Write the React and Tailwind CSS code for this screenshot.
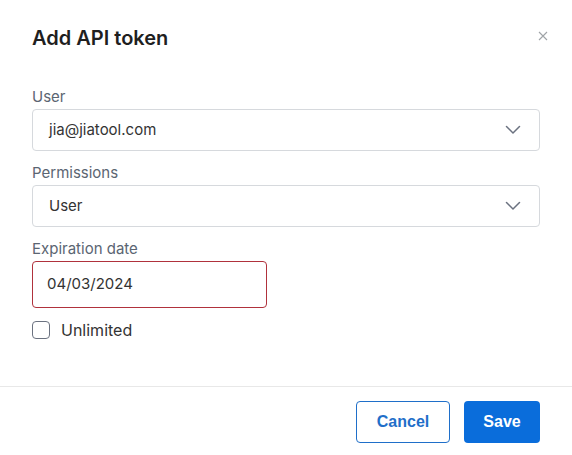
import React, { useState } from "react";

const Chevron = () => (
  <svg width="16" height="10" viewBox="0 0 16 10" fill="none" className="shrink-0">
    <path d="M1.5 1.5L8 8L14.5 1.5" stroke="#6b7280" strokeWidth="1.5" strokeLinecap="round" strokeLinejoin="round" />
  </svg>
);

function Field({ label, children }) {
  return (
    <div className="flex flex-col">
      <label className="text-[15px] leading-[20px] text-[#5b6572] mb-[2px]">{label}</label>
      {children}
    </div>
  );
}

function SelectBox({ value }) {
  return (
    <div className="h-[42px] flex items-center justify-between rounded-[4px] border border-[#d6d9dd] pl-[16px] pr-[18px] text-[15px] text-[#333]">
      <span>{value}</span>
      <Chevron />
    </div>
  );
}

export default function App() {
  const [unlimited, setUnlimited] = useState(false);

  return (
    <div className="w-[572px] h-[455px] bg-white font-['Inter',sans-serif] text-[#222]">
      {/* header */}
      <div className="flex items-start justify-between pl-[32px] pr-[24px] pt-[24px]">
        <h2 className="text-[20px] leading-[28px] font-semibold text-[#1f1f1f]">Add API token</h2>
        <button className="mt-[7px] text-[#9ca3af]">
          <svg width="10" height="10" viewBox="0 0 10 10">
            <path d="M1 1L9 9M9 1L1 9" stroke="#a0a4a8" strokeWidth="1.1" />
          </svg>
        </button>
      </div>

      {/* body */}
      <div className="px-[32px] pt-[35px] flex flex-col gap-[12px]">
        <Field label="User">
          <SelectBox value="jia@jiatool.com" />
        </Field>
        <Field label="Permissions">
          <SelectBox value="User" />
        </Field>
        <Field label="Expiration date">
          <div className="w-[235px] h-[47px] flex items-center rounded-[4px] border border-[#b0323c] px-[14px] text-[15px] text-[#333]">
            04/03/2024
          </div>
        </Field>
        <label className="flex items-center gap-[11px] -mt-[2px] cursor-pointer">
          <input
            type="checkbox"
            checked={unlimited}
            onChange={() => setUnlimited(!unlimited)}
            className="appearance-none w-[18px] h-[18px] rounded-[4px] border border-[#6b7280] bg-white"
          />
          <span className="text-[16px] leading-[24px] text-[#333]">Unlimited</span>
        </label>
      </div>

      {/* footer */}
      <div className="mt-[44px] border-t border-[#e8e8e8] flex justify-end gap-[14px] px-[32px] pt-[14px]">
        <button className="w-[94px] h-[42px] rounded-[4px] border border-[#1f6fc9] text-[#1f6fc9] font-['Liberation_Sans',Arial,sans-serif] font-bold text-[16px]">
          Cancel
        </button>
        <button className="w-[76px] h-[42px] rounded-[4px] bg-[#0a6ddb] text-white font-['Liberation_Sans',Arial,sans-serif] font-bold text-[16px]">
          Save
        </button>
      </div>
    </div>
  );
}
